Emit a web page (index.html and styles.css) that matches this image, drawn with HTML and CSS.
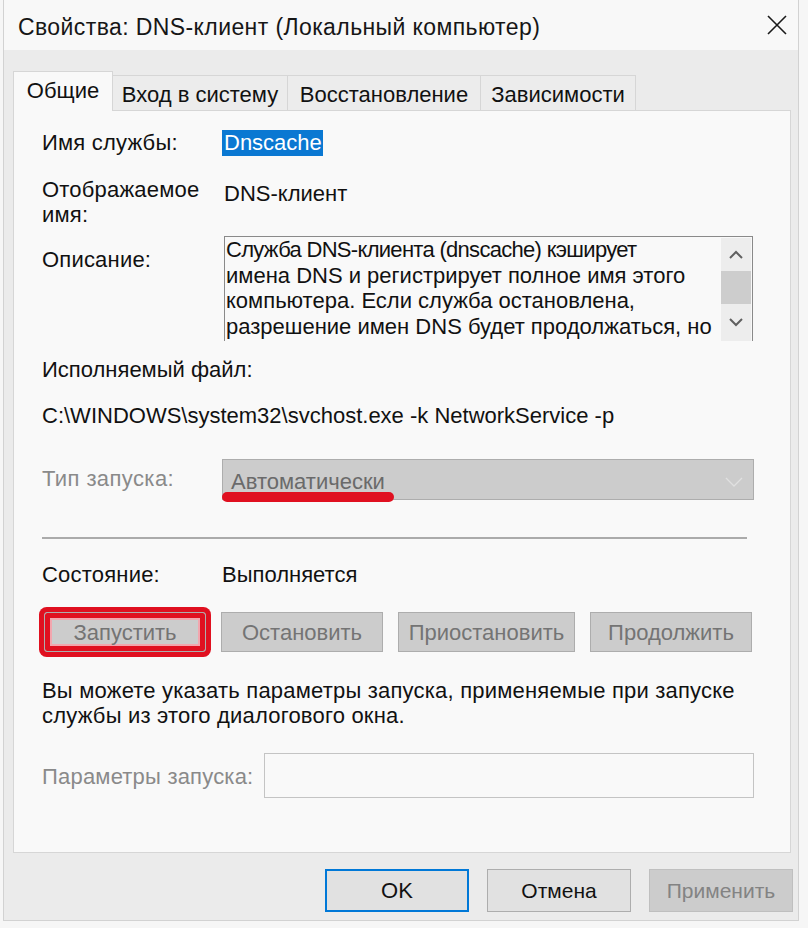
FILE: index.html
```html
<!DOCTYPE html>
<html lang="ru">
<head>
<meta charset="utf-8">
<title>Свойства: DNS-клиент</title>
<link rel="stylesheet" href="styles.css">
</head>
<body>
<div class="window">
  <div class="titlebar">
    <span class="title">Свойства: DNS-клиент (Локальный компьютер)</span>
    <svg class="close" width="22" height="22" viewBox="0 0 22 22"><path d="M2 2 L20 20 M20 2 L2 20" stroke="#1a1a1a" stroke-width="1.6" fill="none"/></svg>
  </div>
  <div class="tabs">
    <div class="tab active t1">Общие</div>
    <div class="tab t2">Вход в систему</div>
    <div class="tab t3">Восстановление</div>
    <div class="tab t4">Зависимости</div>
  </div>
  <div class="panel">
    <div class="row r-name">
      <div class="label">Имя службы:</div>
      <div class="value"><span class="sel">Dnscache</span></div>
    </div>
    <div class="row r-disp">
      <div class="label">Отображаемое<br>имя:</div>
      <div class="value disp">DNS-клиент</div>
    </div>
    <div class="row r-desc">
      <div class="label desc-label">Описание:</div>
      <div class="desc">
        <div class="desc-text"><span class="l1">Служба DNS-клиента (dnscache) кэширует</span><br>имена DNS и регистрирует полное имя этого<br>компьютера. Если служба остановлена,<br>разрешение имен DNS будет продолжаться, но</div>
        <div class="scrollbar">
          <div class="sb-btn"><svg width="16" height="10" viewBox="0 0 16 10"><path d="M2 8 L8 2 L14 8" stroke="#606060" stroke-width="2" fill="none"/></svg></div>
          <div class="sb-thumb"></div>
          <div class="sb-btn sb-down"><svg width="16" height="10" viewBox="0 0 16 10"><path d="M2 2 L8 8 L14 2" stroke="#606060" stroke-width="2" fill="none"/></svg></div>
        </div>
      </div>
    </div>
    <div class="exe-label">Исполняемый файл:</div>
    <div class="exe-path">C:\WINDOWS\system32\svchost.exe -k NetworkService -p</div>
    <div class="row r-type">
      <div class="label dim type-label">Тип запуска:</div>
      <div class="combo">
        <span class="combo-text">Автоматически</span>
        <svg class="combo-arrow" width="18" height="10" viewBox="0 0 18 10"><path d="M1 1 L9 9 L17 1" stroke="#e0e0e0" stroke-width="1.3" fill="none"/></svg>
        <span class="mark"></span>
      </div>
    </div>
    <div class="sep"></div>
    <div class="row r-state">
      <div class="label">Состояние:</div>
      <div class="value">Выполняется</div>
    </div>
    <div class="btnrow">
      <div class="btn b-start">Запустить</div>
      <div class="btn b-stop">Остановить</div>
      <div class="btn b-pause">Приостановить</div>
      <div class="btn b-cont">Продолжить</div>
    </div>
    <p class="hint">Вы можете указать параметры запуска, применяемые при запуске<br>службы из этого диалогового окна.</p>
    <div class="params">
      <div class="label dim params-label">Параметры запуска:</div>
      <div class="input"></div>
    </div>
  </div>
  <div class="footer">
    <div class="fbtn ok">OK</div>
    <div class="fbtn cancel">Отмена</div>
    <div class="fbtn apply">Применить</div>
  </div>
</div>
</body>
</html>
```
FILE: styles.css
```css
* { box-sizing: border-box; }
html, body { margin: 0; padding: 0; }
body {
  background: #f6f6f6;
  font-family: "Liberation Sans", Arial, sans-serif;
  font-size: 22px;
  line-height: 25px;
  color: #111;
  width: 808px;
  height: 928px;
  overflow: hidden;
}
.window {
  margin-left: 3px;
  width: 796px;
  height: 921px;
  background: #ebebeb;
  border: 1px solid #d2d2d2;
  border-top: none;
}
.titlebar {
  height: 50px;
  background: #f8f8f8;
  display: flex;
  justify-content: space-between;
  align-items: flex-start;
  padding: 11px 10px 0 14px;
}
.title {
  font-size: 23px;
  letter-spacing: 0.4px;
  line-height: 25px;
  padding-top: 4px;
  color: #161616;
}
.close { margin-top: 3px; }
.tabs {
  display: flex;
  align-items: flex-end;
  height: 40px;
  margin: 21px 0 -1px 9px;
  position: relative;
  z-index: 1;
}
.tab {
  height: 35px;
  margin-bottom: 1px;
  padding-top: 6px;
  text-align: center;
  background: #ececec;
  border: 1px solid #d6d6d6;
  border-bottom: none;
  border-left: none;
  white-space: nowrap;
}
.tab.active {
  height: 40px;
  margin-bottom: 0;
  background: #f9f9f9;
  border-left: 1px solid #d6d6d6;
}
.t1 { width: 100px; }
.t2 { width: 175px; }
.t3 { width: 193px; }
.t4 { width: 155px; }
.panel {
  margin-left: 9px;
  width: 778px;
  height: 743px;
  background: #f9f9f9;
  border: 1px solid #d6d6d6;
  padding: 19px 36px 0 28px;
}
.row {
  display: grid;
  grid-template-columns: 180px 1fr;
}
.label { letter-spacing: 0.2px; }
.sel {
  display: inline-block;
  height: 26px;
  line-height: 26px;
  padding: 0 1px 0 2px;
  background: #0a78d2;
  color: #fff;
}
.r-disp { margin-top: 21px; }
.disp { padding-top: 4px; padding-left: 2px; }
.r-desc { margin-top: 9px; }
.desc-label { padding-top: 11px; }
.desc {
  margin-left: 2px;
  margin-right: 1px;
  height: 105px;
  border: 1px solid #8a8a8a;
  border-bottom: none;
  display: flex;
  overflow: hidden;
  background: #f9f9f9;
}
.desc-text {
  flex: 1;
  font-size: 22px;
  line-height: 25.5px;
  padding: 0 0 0 1px;
  white-space: nowrap;
  overflow: hidden;
}
.l1 { letter-spacing: -0.7px; }
.scrollbar {
  width: 30px;
  margin: 1px 1px 0 0;
  display: flex;
  flex-direction: column;
  background: #ededed;
}
.sb-btn {
  height: 33px;
  display: flex;
  align-items: center;
  justify-content: center;
}
.sb-down { height: 35px; }
.sb-thumb { height: 33px; background: #cdcdcd; }
.exe-label { margin-top: 16px; }
.exe-path { margin-top: 21px; }
.r-type { margin-top: 31px; }
.dim { color: #8a8a8a; }
.type-label { padding-top: 7px; letter-spacing: 0.4px; }
.combo {
  position: relative;
  height: 41px;
  background: #cccccc;
  border: 1px solid #adadad;
  padding: 9px 0 0 8px;
  color: #6a6a6a;
}
.combo-arrow { position: absolute; right: 10px; top: 17px; }
.mark {
  position: absolute;
  left: -1px;
  top: 32px;
  width: 172px;
  height: 10px;
  border-radius: 5px;
  background: #e01020;
}
.sep {
  margin: 37px 7px 0 0;
  height: 2px;
  background: #ababab;
}
.r-state { margin-top: 23px; }
.btnrow {
  display: flex;
  gap: 15px;
  margin-top: 25px;
  margin-left: 2px;
}
.btn {
  height: 40px;
  padding-top: 7px;
  background: #cccccc;
  border: 1px solid #adadad;
  color: #747474;
  text-align: center;
}
.b-start {
  width: 162px;
  border-radius: 3px;
  box-shadow: inset 0 0 0 5px #e01020, inset 0 0 0 7px #f2a6ae, 0 0 0 5px #e01020;
}
.b-stop { width: 162px; }
.b-pause { width: 177px; }
.b-cont { width: 162px; }
.hint { margin: 26px 0 0 0; letter-spacing: 0.2px; }
.params {
  display: flex;
  margin-top: 25px;
}
.params-label { width: 222px; padding-top: 11px; }
.input {
  flex: 1;
  height: 45px;
  background: #f9f9f9;
  border: 1px solid #c4c4c4;
}
.footer {
  display: flex;
  justify-content: flex-end;
  gap: 18px;
  margin-top: 16px;
  padding-right: 5px;
}
.fbtn {
  width: 144px;
  height: 43px;
  padding-top: 8px;
  text-align: center;
  font-size: 21px;
  background: #e1e1e1;
  border: 1px solid #adadad;
}
.ok { border: 2px solid #0078d7; padding-top: 7px; font-size: 22px; }
.apply { background: #cccccc; border-color: #bfbfbf; color: #838383; }
```
